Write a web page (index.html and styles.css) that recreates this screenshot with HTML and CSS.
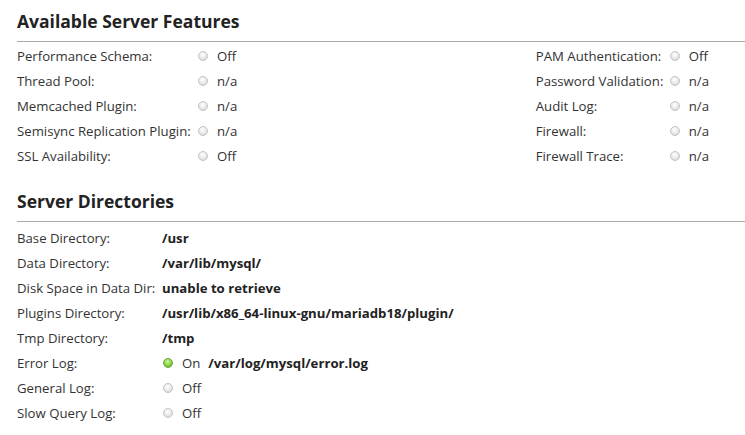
FILE: index.html
```html
<!doctype html>
<html lang="en">
  <head>
    <meta charset="UTF-8" />
    <title>Server Status</title>
    <link rel="stylesheet" href="styles.css">
  </head>
  <body>
    <div class="page">
      <h2 class="section-title">Available Server Features</h2>
      <div class="features">
        <div class="feature-list">
          <div class="row"><span class="label">Performance Schema:</span><span class="status"><i class="led"></i>Off</span></div>
          <div class="row"><span class="label">Thread Pool:</span><span class="status"><i class="led"></i>n/a</span></div>
          <div class="row"><span class="label">Memcached Plugin:</span><span class="status"><i class="led"></i>n/a</span></div>
          <div class="row"><span class="label">Semisync Replication Plugin:</span><span class="status"><i class="led"></i>n/a</span></div>
          <div class="row"><span class="label">SSL Availability:</span><span class="status"><i class="led"></i>Off</span></div>
        </div>
        <div class="feature-list feature-list-right">
          <div class="row"><span class="label">PAM Authentication:</span><span class="status"><i class="led"></i>Off</span></div>
          <div class="row"><span class="label">Password Validation:</span><span class="status"><i class="led"></i>n/a</span></div>
          <div class="row"><span class="label">Audit Log:</span><span class="status"><i class="led"></i>n/a</span></div>
          <div class="row"><span class="label">Firewall:</span><span class="status"><i class="led"></i>n/a</span></div>
          <div class="row"><span class="label">Firewall Trace:</span><span class="status"><i class="led"></i>n/a</span></div>
        </div>
      </div>

      <h2 class="section-title">Server Directories</h2>
      <div class="dir-list">
        <div class="row"><span class="label">Base Directory:</span><span class="path">/usr</span></div>
        <div class="row"><span class="label">Data Directory:</span><span class="path">/var/lib/mysql/</span></div>
        <div class="row"><span class="label">Disk Space in Data Dir:</span><span class="path">unable to retrieve</span></div>
        <div class="row"><span class="label">Plugins Directory:</span><span class="path">/usr/lib/x86_64-linux-gnu/mariadb18/plugin/</span></div>
        <div class="row"><span class="label">Tmp Directory:</span><span class="path">/tmp</span></div>
        <div class="row"><span class="label">Error Log:</span><span class="status"><i class="led led-on"></i>On<span class="path path-inline">/var/log/mysql/error.log</span></span></div>
        <div class="row"><span class="label">General Log:</span><span class="status"><i class="led"></i>Off</span></div>
        <div class="row"><span class="label">Slow Query Log:</span><span class="status"><i class="led"></i>Off</span></div>
      </div>
    </div>
  </body>
</html>
```

FILE: styles.css
```css
body {
  margin: 0;
  padding: 0;
  background: #fff;
  color: #333;
  font-family: 'Open Sans', 'Noto Sans', sans-serif;
  font-size: 13.2px;
}

.page {
  padding: 8px 0 0 17px;
}

.section-title {
  margin: 0;
  font-size: 17.5px;
  font-weight: bold;
  line-height: 26px;
  padding-bottom: 7px;
  border-bottom: 1px solid #a8a8a8;
  color: #222;
}

.features {
  display: flex;
  justify-content: space-between;
  padding-top: 1px;
  padding-right: 36px;
  margin-bottom: 20px;
}

.row {
  display: flex;
  align-items: center;
  height: 25px;
}

.feature-list .label {
  width: 181px;
}

.feature-list-right .label {
  width: 134px;
}

.dir-list {
  padding-top: 3px;
}

.dir-list .label {
  width: 145px;
}

.status {
  display: flex;
  align-items: center;
}

.led {
  display: inline-block;
  width: 10px;
  height: 10px;
  border-radius: 50%;
  margin-right: 9px;
  box-sizing: border-box;
  border: 1px solid #c4c4c4;
  background: radial-gradient(circle at 45% 35%, #ffffff 0%, #eeeeee 40%, #d0d0d0 100%);
}

.dir-list .led {
  margin-left: 1px;
}

.led-on {
  border-color: #6aa83a;
  background: radial-gradient(circle at 45% 35%, #d8f7a8 0%, #8fd84a 45%, #5aa82a 100%);
}

.path {
  font-weight: bold;
  color: #222;
}

.path-inline {
  margin-left: 8px;
}
```
